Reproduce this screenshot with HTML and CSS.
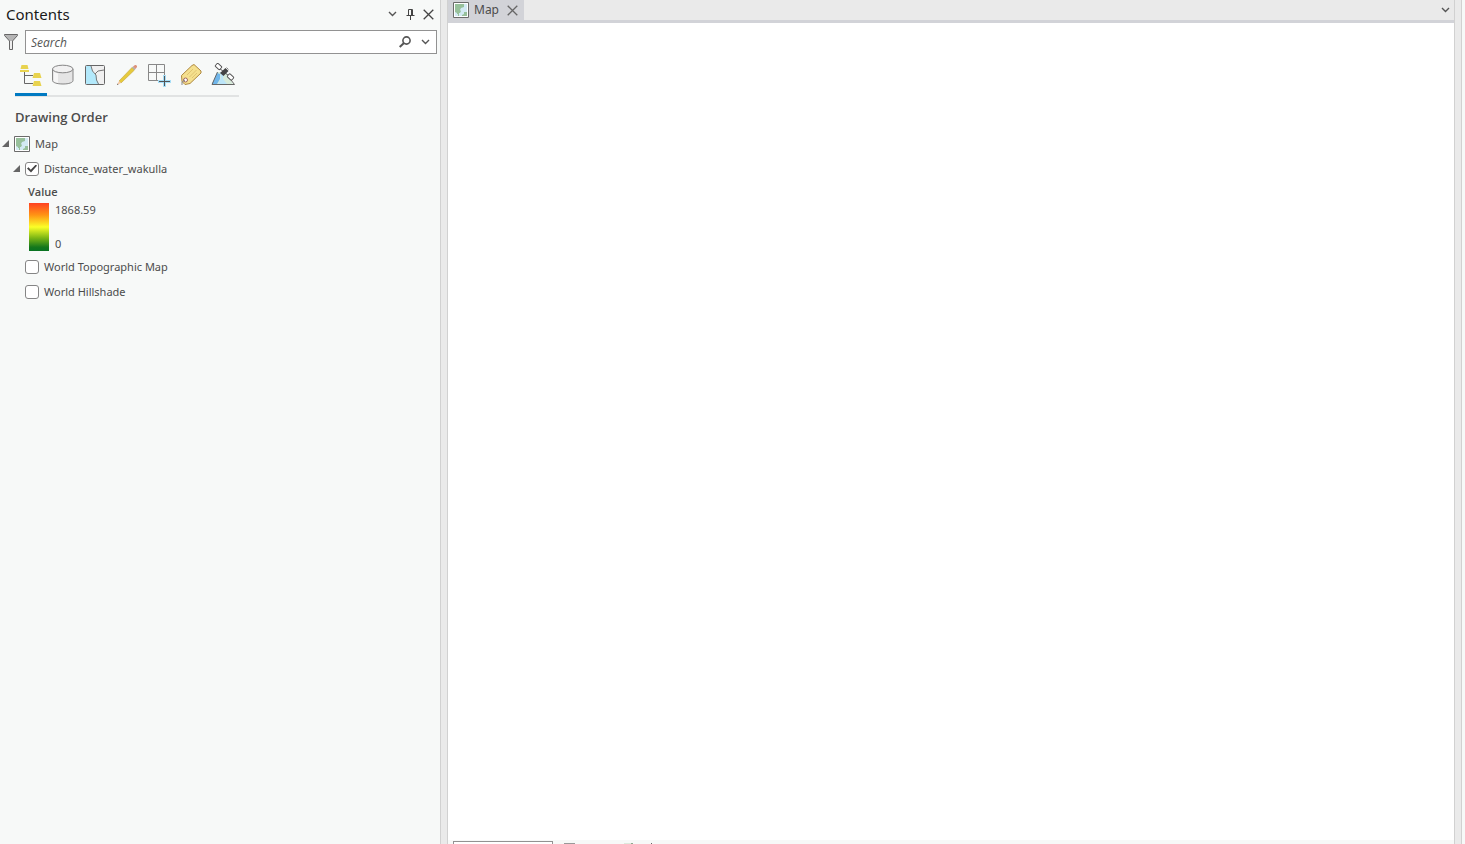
FILE: index.html
```html
<!DOCTYPE html>
<html lang="en">

<head>
    <meta charset="UTF-8">
    <meta name="viewport" content="width=device-width">
    <title>Map</title>
    <link rel="stylesheet" href="styles.css">
</head>

<body>
    <svg class="defs" aria-hidden="true">
        <symbol id="map-icon" viewBox="0 0 16 16">
            <path fill="#fff" stroke="#6b6b6b" d="M.5.5h15v15H.5z" />
            <path fill="#d3eaf4" d="M2 2h12v12H2z" />
            <path fill="#97c09b" d="M2 2h9v3L8 6 7 8l1 1-1 2H6v3H5v-2H4v-1l-2-1zM14 10v4H9v-1l2-1v-2z" />
        </symbol>
        <symbol id="chevron" viewBox="0 0 9 6">
            <path fill="none" stroke="#555" stroke-width="1.4" d="M1 1l3.500 3.500L8 1" />
        </symbol>
        <symbol id="close" viewBox="0 0 11 11">
            <path fill="none" stroke="currentColor" stroke-width="1.300" d="M.7.7l9.600 9.600M10.300.7L.7 10.300" />
        </symbol>
    </svg>

    <aside class="contents">
        <header class="pane-header">
            <h1>Contents</h1>
            <button aria-label="Pane options"><svg width="9" height="6"><use href="#chevron" /></svg></button>
            <button aria-label="Auto hide">
                <svg width="9" height="11" viewBox="0 0 9 11">
                    <path fill="none" stroke="#444" d="M2.500 6V.5h4V6M.5 6.500h8M4.500 7v4M5.500 1v5" />
                </svg>
            </button>
            <button aria-label="Close pane"><svg width="11" height="11"><use href="#close" /></svg></button>
        </header>

        <div class="search-row">
            <button aria-label="Filter">
                <svg width="14" height="16" viewBox="0 0 14 16">
                    <path fill="#b5b5b5" stroke="#666" d="M.5.5h13v1L8.500 7v8.500h-3V7L.5 1.500z" />
                    <path fill="#eee" d="M6 7h2v8H6z" />
                </svg>
            </button>
            <div class="search-box">
                <input type="text" placeholder="Search" aria-label="Search">
                <button aria-label="Find">
                    <svg width="12" height="12" viewBox="0 0 12 12">
                        <circle cx="7.500" cy="4.500" r="3.600" fill="none" stroke="#555" stroke-width="1.600" />
                        <path stroke="#555" stroke-width="2" d="M5 7L.7 11" />
                    </svg>
                </button>
                <button aria-label="Search options"><svg width="9" height="6"><use href="#chevron" /></svg></button>
            </div>
        </div>

        <nav class="view-tabs">
            <button class="active" aria-label="List by drawing order">
                <svg width="24" height="24" viewBox="0 0 24 24">
                    <path fill="none" stroke="#666" d="M5.500 8v11.500H14M5.500 11.500H14" />
                    <path fill="#e8d34f" d="M2.500 1h6l1 4h-8zM1 6h9v2H1zM15 9h6l1.500 5h-9zM15 17h6l1.500 5h-9z" />
                </svg>
            </button>
            <button aria-label="List by data source">
                <svg width="24" height="24" viewBox="0 0 24 24">
                    <path fill="#e5e5e5" stroke="#858585" d="M1.500 6v11.500c0 2 4.500 3.500 10.500 3.500s10-1.500 10-3.500V6" />
                    <path fill="#f6f6f6" d="M3 9l4 1.500V20l-4-1.500z" />
                    <ellipse cx="11.750" cy="6" rx="10.250" ry="3.800" fill="#f1f1f1" stroke="#858585" />
                </svg>
            </button>
            <button aria-label="List by selection">
                <svg width="24" height="24" viewBox="0 0 24 24">
                    <rect x="2.500" y="2.500" width="19" height="19" rx="1" fill="#f0f0f0" />
                    <path fill="#b3e9fb" d="M3 3h5l2 6 3 3 1 5 2 4H3z" />
                    <path fill="none" stroke="#777" d="M8 3l1.500 5 3.500 4 .5 5 2 4M12 11l3-3 6-1" />
                    <rect x="2.500" y="2.500" width="19" height="19" rx="1" fill="none" stroke="#666" />
                </svg>
            </button>
            <button aria-label="List by editing">
                <svg width="24" height="24" viewBox="0 0 24 24">
                    <path fill="#e6ca3c" stroke="#c3a53d" stroke-width=".6" d="M4 18L17 4.500l2.500 2.500L6 20z" />
                    <path fill="#f5c7a0" d="M4 18l2 2-4 2z" />
                    <path fill="#555" d="M2.500 20.500l1 1L2 22z" />
                    <path fill="#aaa" d="M17 4.500L18 3.500 20.500 6l-1 1z" />
                    <path fill="#dd927b" d="M18 3.500L20 2h1l1 1v1l-1.500 2z" />
                </svg>
            </button>
            <button aria-label="List by snapping">
                <svg width="24" height="24" viewBox="0 0 24 24">
                    <path fill="none" stroke="#888" d="M12 17.500H1.500v-16h16V12M9.500 2v15M2 9.500h15" />
                    <path fill="none" stroke="#a7dff8" stroke-width="3" d="M17.500 12v12M11 18.500h13" />
                    <path fill="none" stroke="#555" d="M17.500 13v10M12 18.500h11" />
                </svg>
            </button>
            <button aria-label="List by labeling">
                <svg width="24" height="24" viewBox="0 0 24 24">
                    <path fill="#f5e08e" stroke="#ae883f" d="M2.500 12.500L13 2.500l2-1 7 6.500v2L11 20.500l-5 1-3-3z" />
                    <path fill="none" stroke="#d0b060" stroke-width=".6" d="M8 12l6-6M10.500 14l7-7M13 15l5-5" />
                    <circle cx="6.500" cy="17" r="2" fill="#fff" stroke="#a0655c" />
                    <path fill="none" stroke="#888" d="M6 17l-3 2v3" />
                </svg>
            </button>
            <button aria-label="List by perspective imagery">
                <svg width="24" height="24" viewBox="0 0 24 24">
                    <path fill="#d7ebda" d="M7 9h8l7 12H1z" />
                    <path fill="#70b6ea" d="M6 10l3 1v5l-3 5H1z" />
                    <path fill="#bce5f8" d="M9 9l4 2-1 5 4 5H7l3-6z" />
                    <path fill="none" stroke="#666" d="M6.500 9L1 21.500h22.500L20 17" />
                    <path stroke="#555" d="M8 5l10 8" />
                    <rect x="-3" y="-2" width="6" height="4" rx="1" fill="#fff" stroke="#555" transform="translate(7.500 3.500) rotate(42)" />
                    <rect x="-3" y="-2" width="6" height="4" rx="1" fill="#fff" stroke="#555" transform="translate(19.500 14) rotate(42)" />
                    <path fill="#444" d="M9 10L14.500 5l3 3-5 5z" />
                    <path fill="none" stroke="#888" d="M15.500 4.500l2 2" />
                </svg>
            </button>
        </nav>

        <h2>Drawing Order</h2>

        <ul class="layers">
            <li class="row">
                <button class="expander" aria-label="Collapse Map"></button>
                <svg width="16" height="16"><use href="#map-icon" /></svg>
                <span>Map</span>
            </li>
            <li class="row child">
                <button class="expander" aria-label="Collapse layer"></button>
                <input type="checkbox" id="distance" checked>
                <label for="distance">Distance_water_wakulla</label>
            </li>
            <li class="legend">
                <div class="legend-title">Value</div>
                <div class="legend-body">
                    <div class="ramp"></div>
                    <div class="ramp-labels"><span>1868.59</span><span>0</span></div>
                </div>
            </li>
            <li class="row child leaf">
                <input type="checkbox" id="topo">
                <label for="topo">World Topographic Map</label>
            </li>
            <li class="row child leaf">
                <input type="checkbox" id="hillshade">
                <label for="hillshade">World Hillshade</label>
            </li>
        </ul>
    </aside>

    <div class="splitter"></div>

    <main class="map-view">
        <div class="tab-strip">
            <div class="tab">
                <svg width="16" height="16"><use href="#map-icon" /></svg>
                <span>Map</span>
                <button aria-label="Close Map"><svg width="11" height="11"><use href="#close" /></svg></button>
            </div>
            <button aria-label="Open views"><svg width="9" height="6"><use href="#chevron" /></svg></button>
        </div>
        <div class="canvas"></div>
        <footer class="status-bar">
            <select aria-label="Map scale"></select>
            <svg width="90" height="3" viewBox="0 0 90 3">
                <path fill="#999" d="M0 2h11v1H0z" />
                <path fill="#dce9dc" d="M60 2h7v1h-7z" />
                <path fill="#8fa88f" d="M67 2h2v1h-2z" />
                <path fill="#666" d="M87 2h1v1h-1z" />
            </svg>
        </footer>
    </main>

    <div class="splitter right"></div>
</body>

</html>
```
FILE: styles.css
```css
* {
    box-sizing: border-box;
    margin: 0;
    padding: 0;
}
body {
    height: 100vh;
    overflow: hidden;
    display: flex;
    background: #f7f9f8;
    color: #4c4c4c;
    font: 12px/16px "Noto Sans", "Open Sans", sans-serif;
}
button {
    display: flex;
    align-items: center;
    justify-content: center;
    border: 0;
    background: none;
    color: #444;
}
svg {
    display: block;
    flex: none;
}
.defs {
    position: absolute;
    width: 0;
    height: 0;
}

/* contents pane */
.contents {
    flex: none;
    width: 440px;
}
.pane-header {
    display: flex;
    align-items: center;
    height: 28px;
    padding: 0 3px 0 6px;
}
.pane-header h1 {
    flex: 1;
    color: #1a1a1a;
    font-size: 15px;
    font-weight: 400;
    line-height: 20px;
}
.pane-header button {
    width: 18px;
    height: 20px;
}
.search-row {
    display: flex;
    align-items: center;
    gap: 7px;
    padding: 2px 3px 0 4px;
}
.search-box {
    flex: 1;
    display: flex;
    height: 24px;
    border: 1px solid #929292;
    background: #fff;
}
.search-box input {
    flex: 1;
    min-width: 0;
    padding-left: 5px;
    border: 0;
    outline: 0;
    background: none;
    font: italic 12px "Open Sans", sans-serif;
}
.search-box input::placeholder {
    color: #555;
}
.search-box button {
    width: 21px;
}
.view-tabs {
    display: flex;
    width: 224px;
    margin: 9px 0 0 15px;
    border-bottom: 2px solid #e1e3e3;
}
.view-tabs button {
    width: 32px;
    height: 32px;
    padding-bottom: 8px;
}
.view-tabs .active {
    border-bottom: 3px solid #007ac2;
    padding-bottom: 5px;
    margin-bottom: -1px;
    height: 33px;
}
.contents h2 {
    margin: 10px 0 4px 15px;
    font-family: "Open Sans", sans-serif;
    font-size: 13px;
    font-weight: 600;
    line-height: 20px;
}

/* layer tree */
.layers {
    list-style: none;
    font-size: 11px;
}
.row {
    display: flex;
    align-items: center;
    gap: 5px;
    height: 25px;
    padding-left: 2px;
}
.child {
    padding-left: 13px;
}
.leaf {
    padding-left: 25px;
}
.expander {
    width: 7px;
    height: 7px;
    background: #666;
    clip-path: polygon(100% 0, 100% 100%, 0 100%);
}
.row input {
    appearance: none;
    width: 14px;
    height: 14px;
    border: 1px solid #858585;
    border-radius: 3px;
    background: #fff;
}
.row input:checked::before {
    content: "";
    display: block;
    width: 10px;
    height: 8px;
    margin: 2px 1px;
    background: #444;
    clip-path: polygon(0 50%, 15% 35%, 38% 65%, 88% 0, 100% 15%, 40% 100%);
}
.legend {
    padding: 2px 0 3px 28px;
}
.legend-title {
    font-family: "Open Sans", sans-serif;
    font-weight: 600;
    line-height: 18px;
}
.legend-body {
    display: flex;
    gap: 6px;
    padding: 2px 0 0 1px;
}
.ramp {
    width: 20px;
    height: 48px;
    background: linear-gradient(#ff4122, #ff9414 25%, #fbff27 50%, #80b915 72%, #14771c 92%, #087322);
}
.ramp-labels {
    display: flex;
    flex-direction: column;
    justify-content: space-between;
    line-height: 14px;
}

/* map view */
.splitter {
    flex: none;
    width: 8px;
    border: solid #d1d1d1;
    border-width: 0 1px;
    background: #eaeaea;
}
.right {
    margin-right: 3px;
}
.map-view {
    flex: 1;
    display: flex;
    flex-direction: column;
    min-width: 0;
}
.tab-strip {
    display: flex;
    justify-content: space-between;
    height: 23px;
    padding-right: 4px;
    border-bottom: 3px solid #d2d3d8;
    background: #eaeaea;
}
.tab {
    display: flex;
    align-items: center;
    gap: 5px;
    width: 76px;
    padding-left: 5px;
    background: #d2d3d8;
}
.tab button {
    margin-left: 3px;
    color: #666;
}
.tab-strip > button {
    width: 10px;
}
.canvas {
    flex: 1;
    background: #fff;
}
.status-bar {
    display: flex;
    gap: 11px;
    height: 4px;
    padding: 1px 5px 0;
    overflow: hidden;
}
.status-bar select {
    appearance: none;
    flex: none;
    width: 100px;
    height: 22px;
    border: 1px solid #929292;
    background: #fff;
}
```
